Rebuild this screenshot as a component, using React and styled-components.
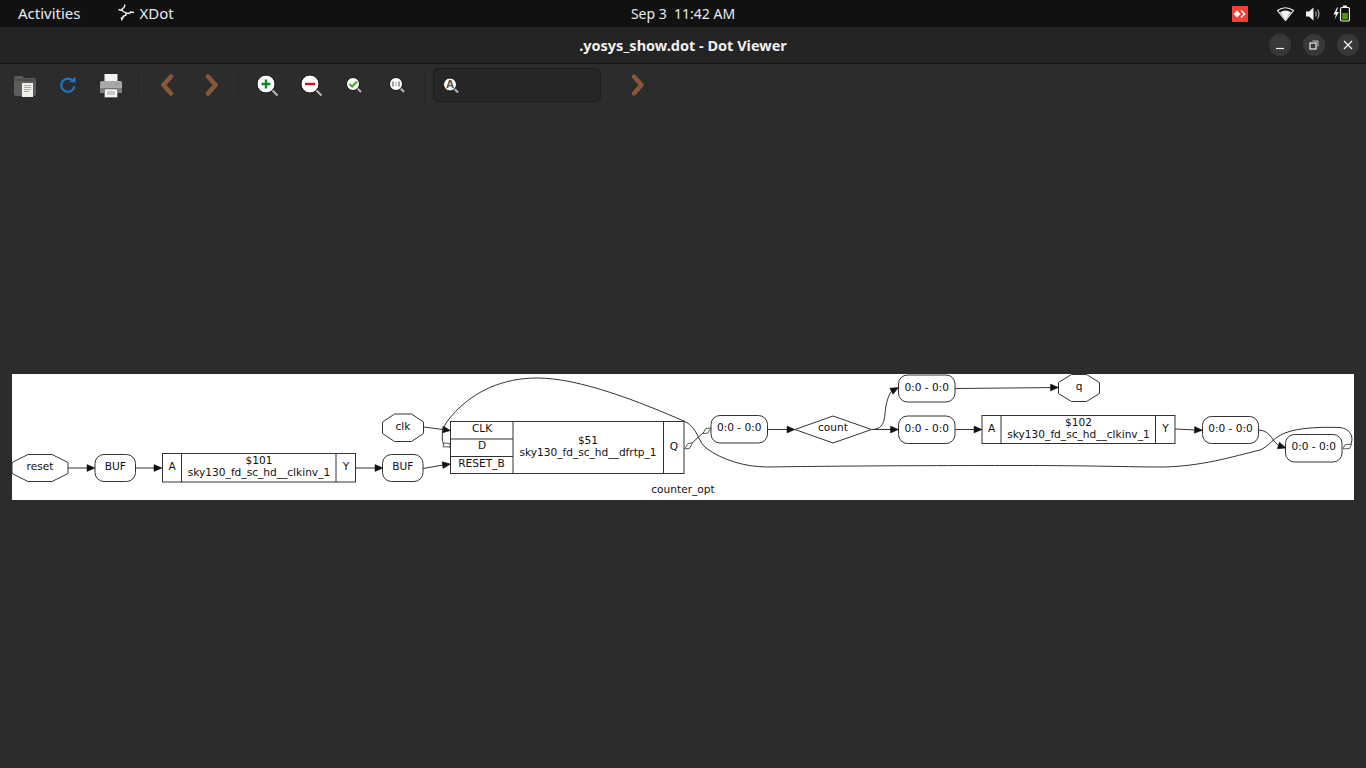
import React from 'react'
import styled, { createGlobalStyle } from 'styled-components'

const GlobalStyle = createGlobalStyle`
  html, body {
    margin: 0;
    padding: 0;
    height: 100%;
    background: #2c2c2c;
    overflow: hidden;
  }
`

const Desktop = styled.div`
  display: flex;
  flex-direction: column;
  width: 1366px;
  height: 768px;
  font-family: 'Noto Sans', sans-serif;
`

const TopBar = styled.div`
  display: grid;
  grid-template-columns: 1fr auto 1fr;
  align-items: center;
  height: 27px;
  background: #111111;
  color: #e6ecf2;
  font-size: 14px;
`

const TopLeft = styled.div`
  display: flex;
  align-items: center;
  padding: 0 0 2px 18px;
  font-size: 15px;
`

const AppMenu = styled.div`
  display: flex;
  align-items: center;
  gap: 5px;
  margin-left: 37px;
`

const Clock = styled.div`
  white-space: pre;
`

const TopRight = styled.div`
  display: flex;
  align-items: center;
  justify-content: flex-end;
  padding-right: 16px;
`

const Tray = styled.svg`
  display: block;
  margin-left: ${({ $gap }) => $gap || 0}px;
`

const TitleBar = styled.div`
  position: relative;
  display: flex;
  align-items: center;
  justify-content: center;
  height: 36px;
  background: #242424;
  border-bottom: 1px solid #171717;
  color: #f0f0f0;
  font-size: 14.5px;
  font-weight: 700;
`

const WindowButtons = styled.div`
  position: absolute;
  right: 7px;
  top: 7px;
  display: flex;
  gap: 12px;
`

const WindowButton = styled.div`
  width: 22px;
  height: 22px;
  border-radius: 50%;
  background: #383838;
  display: flex;
  align-items: center;
  justify-content: center;
`

const Toolbar = styled.div`
  display: flex;
  align-items: center;
  height: 42px;
  padding-left: 3px;
  background: #2c2c2c;
`

const Tool = styled.div`
  width: ${({ $w }) => $w || 44}px;
  height: 34px;
  display: flex;
  align-items: center;
  justify-content: center;
`

const Separator = styled.div`
  width: 1px;
  height: 34px;
  background: #262626;
  margin: 0 ${({ $right }) => $right || 6}px 0 ${({ $left }) => $left || 6}px;
`

const SearchEntry = styled.div`
  box-sizing: border-box;
  width: 168px;
  height: 34px;
  border: 1px solid #1c1c1c;
  border-radius: 6px;
  background: #262626;
  display: flex;
  align-items: center;
  padding-left: 7px;
`

const NextTool = styled(Tool)`
  margin-left: 15px;
`

const Canvas = styled.div`
  flex: 1;
  display: flex;
  align-items: center;
  padding: 0 12px;
  background: #2c2c2c;
`

const Sheet = styled.svg`
  display: block;
  width: 1342px;
  height: 126px;
  background: #ffffff;
`

const Label = styled.text`
  font-family: 'DejaVu Sans', sans-serif;
  font-size: 10.6px;
  fill: #111111;
  text-anchor: middle;
  dominant-baseline: central;
`

const Shape = styled.path`
  fill: none;
  stroke: #333333;
  stroke-width: 1;
`

const Head = styled.polygon`
  fill: #111111;
  stroke: #111111;
  stroke-width: 0.5;
`

const Pin = styled.polygon`
  fill: #ffffff;
  stroke: #333333;
  stroke-width: 0.8;
`

// rounded wire nodes and buffers
const Pill = ({ x, y, w, h, text }) => (
  <g>
    <Shape as="rect" x={x} y={y} width={w} height={h} rx="9" ry="9" />
    <Label x={x + w / 2} y={y + h / 2 - 2}>{text}</Label>
  </g>
)

const Octagon = ({ x, y, w, h, text, inset = 14 }) => {
  const side = 8
  const d = `M${x},${y + side} L${x + inset},${y} L${x + w - inset},${y} L${x + w},${y + side} L${x + w},${y + h - side} L${x + w - inset},${y + h} L${x + inset},${y + h} L${x},${y + h - side} Z`
  return (
    <g>
      <Shape d={d} />
      <Label x={x + w / 2} y={y + h / 2 - 2}>{text}</Label>
    </g>
  )
}

// arrow that ends at x,y and points along angle a (degrees)
const Arrow = ({ x, y, a = 0 }) => (
  <Head points="-8,-3.4 0,0 -8,3.4" transform={`translate(${x} ${y}) rotate(${a})`} />
)

const Cell = ({ x, y, w, h, id, text }) => (
  <g>
    <Shape as="rect" x={x} y={y} width={w} height={h} />
    <Shape d={`M${x + 19},${y} V${y + h} M${x + w - 19.5},${y} V${y + h}`} />
    <Label x={x + 9.5} y={y + h / 2 - 2}>A</Label>
    <Label x={x + w / 2} y={y + h / 2 - 7.5}>{id}</Label>
    <Label x={x + w / 2} y={y + h / 2 + 4}>{text}</Label>
    <Label x={x + w - 9.5} y={y + h / 2 - 2}>Y</Label>
  </g>
)

const Graph = () => (
  <Sheet viewBox="12 374 1342 126">
    <Octagon x={12} y={454.5} w={56} h={27} text="reset" inset={16} />
    <Pill x={95} y={454.5} w={40.5} h={27} text="BUF" />
    <Cell x={162.5} y={453.5} w={193} h={28.5} id="$101" text="sky130_fd_sc_hd__clkinv_1" />
    <Pill x={382.5} y={454.5} w={40.5} h={27} text="BUF" />
    <Octagon x={382.5} y={414} w={41} h={27.5} text="clk" inset={12} />

    <Shape as="rect" x={450.5} y={421.5} width={233.5} height={52} />
    <Shape d="M513,421.5 V473.5 M663.5,421.5 V473.5 M450.5,439 H513 M450.5,456.5 H513" />
    <Label x={482} y={428}>CLK</Label>
    <Label x={482} y={445}>D</Label>
    <Label x={481.5} y={463}>RESET_B</Label>
    <Label x={588} y={440}>$51</Label>
    <Label x={588} y={451.5}>sky130_fd_sc_hd__dfrtp_1</Label>
    <Label x={674} y={445.5}>Q</Label>

    <Pill x={711} y={415.5} w={56.5} h={27.5} text="0:0 - 0:0" />
    <Shape d="M795,429.5 L833,416 L871.5,429.5 L833,443 Z" />
    <Label x={833} y={427}>count</Label>
    <Pill x={898.5} y={375} w={56.5} h={27} text="0:0 - 0:0" />
    <Pill x={898.5} y={416} w={56.5} h={27.5} text="0:0 - 0:0" />
    <Octagon x={1058.5} y={374.5} w={41} h={27} text="q" inset={13} />
    <Cell x={982} y={415.5} w={193} h={28} id="$102" text="sky130_fd_sc_hd__clkinv_1" />
    <Pill x={1202.5} y={416.5} w={56} h={27} text="0:0 - 0:0" />
    <Pill x={1285.5} y={434.5} w={56.5} h={27.5} text="0:0 - 0:0" />
    <Label x={683} y={489}>counter_opt</Label>

    <Shape d="M68,468 H88 M136,468 H155 M356,468 H376" />
    <Arrow x={95} y={468} />
    <Arrow x={162} y={468} />
    <Arrow x={383} y={468} />
    <Shape d="M423,468.5 L443,465" />
    <Arrow x={450.5} y={464} a={-8} />
    <Shape d="M423.5,427 L443,429.5" />
    <Arrow x={450.5} y={430.5} a={7} />
    <Shape d="M767.5,429.5 H788 M871.5,429.5 H891 M955,429.5 H975 M955,388.5 L1051,387.6 M1175,429 L1196,430" />
    <Arrow x={795} y={429.5} />
    <Arrow x={898.5} y={429.5} />
    <Arrow x={982} y={429.5} />
    <Arrow x={1058.5} y={387.5} />
    <Arrow x={1202.5} y={430.2} a={2} />
    <Shape d="M871.5,429.5 C886,429.5 884,417 886,406 C887.5,397 891,391 893,390" />
    <Arrow x={898.5} y={387.5} a={-28} />
    <Shape d="M1259,430 C1272,431 1272,443 1280,446" />
    <Arrow x={1286} y={448} a={18} />

    {/* feedback from Q round the flop */}
    <Shape d="M446,423 C470,390 505,378 537,378 C580,378 640,402 685,421.5 C698,428 698,442 706,448 C722,460 745,467 768,467 C800,466.5 880,465.5 1020,465.5 C1090,465.5 1130,467 1160,467 C1200,467 1235,456 1260,450 C1270,446 1272,438 1285,433 C1300,427 1325,427 1340,427.5 C1350,429 1354,436 1351,444" />
    <Shape d="M446,423 C442,430 441,440 444,445 L450,447" />
    <Shape d="M692,443 L704,432" />
    <Pin points="684.8,448.8 688,443.5 692.5,442.8 689.5,448.4" />
    <Pin points="703,433.5 705.8,428.5 710.8,428 707.8,433.2" />
    <Pin points="443,446.8 444,443 450,443.5 450,447" />
    <Pin points="1343,448.8 1345,444.8 1351.5,444.2 1349.5,448.6" />
  </Sheet>
)

const Lens = ({ size, cx = 12, cy = 11, r = 9, children, end = 11.5 }) => (
  <svg width={size} height={size} viewBox={`0 0 ${size} ${size}`}>
    <path d={`M${cx + r * 0.7},${cy + r * 0.7} L${cx + end},${cy + end}`} stroke="#b9b8ac" strokeWidth="2" />
    <circle cx={cx} cy={cy} r={r} fill="#fbfbf8" stroke="#141414" strokeWidth="1" />
    {children}
  </svg>
)

const Chevron = ({ left }) => (
  <svg width="14" height="22" viewBox="0 0 14 22">
    <path
      d={left ? 'M11,2.5 L3.5,11 L11,19.5' : 'M3,2.5 L10.5,11 L3,19.5'}
      fill="none"
      stroke="#87583a"
      strokeWidth="4.4"
      strokeLinecap="round"
      strokeLinejoin="round"
    />
  </svg>
)

const FolderIcon = () => (
  <svg width="24" height="23" viewBox="0 0 24 23">
    <path d="M1,4 Q1,2 3,2 H9 L11,4 H21 Q23,4 23,6 V20 Q23,22 21,22 H3 Q1,22 1,20 Z" fill="#5c5c5c" />
    <path d="M1,6 H23" stroke="#3d3d3d" strokeWidth="1" />
    <path d="M9,9 H20 V23 H9 Z" fill="#f0f0ec" />
    <path d="M11,11.5 H18 M11,13.5 H18 M11,15.5 H18 M11,17.5 H16" stroke="#a8a89e" strokeWidth="1" />
  </svg>
)

const ReloadIcon = () => (
  <svg width="18" height="18" viewBox="0 0 18 18">
    <path d="M14,5 A6.6,6.6 0 1 0 15.4,10.4" fill="none" stroke="#1c76c8" strokeWidth="2.2" />
    <path d="M10.5,5.8 L16.6,6.8 L16.4,0.8 Z" fill="#1c76c8" />
  </svg>
)

const PrinterIcon = () => (
  <svg width="24" height="25" viewBox="0 0 24 25">
    <path d="M5.5,1 H18.5 V9 H5.5 Z" fill="#f2f2f2" />
    <path d="M1,10 Q1,8 3,8 H21 Q23,8 23,10 V19 Q23,20 22,20 H2 Q1,20 1,19 Z" fill="#a9a9a9" />
    <path d="M1,15 H23 V19 Q23,20 22,20 H2 Q1,20 1,19 Z" fill="#7f7f7f" />
    <path d="M16.5,11 H17.5 M18.5,11 H19.5" stroke="#c25a48" strokeWidth="1" />
    <path d="M20.5,11 H21.5" stroke="#6aa84f" strokeWidth="1" />
    <path d="M5.5,16 H18.5 V24.5 H5.5 Z" fill="#f5f5f5" stroke="#555555" strokeWidth="0.6" />
    <path d="M8,19 H16 M8,21 H16" stroke="#9a9a9a" strokeWidth="1" />
  </svg>
)

const XDotIcon = () => (
  <svg width="17" height="18" viewBox="0 0 17 18">
    <path
      d="M7,0.5 L6,3.5 L4,5 L4.5,7 M0.5,5.5 L4,6.5 M4.5,7 L8,9 M8,9 L11.5,9.5 L12.5,8 L16,8.5 M8,9 L8,11 L5,12.5 L5,14 L3.5,14 L4,16.5"
      fill="none"
      stroke="#f0f0f0"
      strokeWidth="1.4"
    />
  </svg>
)

const App = () => (
  <Desktop>
    <GlobalStyle />
    <TopBar>
      <TopLeft>
        <span>Activities</span>
        <AppMenu>
          <XDotIcon />
          <span>XDot</span>
        </AppMenu>
      </TopLeft>
      <Clock>Sep 3  11:42 AM</Clock>
      <TopRight>
        <Tray width="16" height="16" viewBox="0 0 16 16">
          <rect width="16" height="16" fill="#ef4136" />
          <path d="M5,4.5 L8.5,8 L5,11.5 L1.5,8 Z" fill="#ffffff" />
          <path d="M9,4.5 L12.5,8 L9,11.5" fill="none" stroke="#ffffff" strokeWidth="1.6" />
        </Tray>
        <Tray $gap="29" width="17" height="14" viewBox="0 0 17 14">
          <path d="M0.5,3.5 Q8.5,-2 16.5,3.5 L8.5,13.5 Z" fill="none" stroke="#f2f2f2" strokeWidth="1.2" />
          <path d="M3,5.2 Q8.5,2 14,5.2 L8.5,13 Z" fill="#f2f2f2" />
        </Tray>
        <Tray $gap="12" width="15" height="14" viewBox="0 0 15 14">
          <path d="M0,4.5 H3 L7.5,0.5 V13.5 L3,9.5 H0 Z" fill="#f2f2f2" />
          <path d="M9.5,4.5 Q11,7 9.5,9.5 M11.5,2.5 Q14.5,7 11.5,11.5" fill="none" stroke="#b5b5b5" strokeWidth="1.1" />
        </Tray>
        <Tray $gap="12" width="17" height="17" viewBox="0 0 17 17">
          <path d="M4,2.5 L0.5,9.5 H3 L1.5,14.5 L6,7 H3.5 L5,2.5 Z" fill="#f2f2f2" />
          <rect x="7.5" y="2.5" width="9" height="13.5" rx="1.5" fill="none" stroke="#f2f2f2" strokeWidth="1.2" />
          <rect x="10" y="0.5" width="4" height="2" fill="#f2f2f2" />
          <rect x="9.2" y="8" width="5.6" height="6.5" fill="#4e9a06" />
        </Tray>
      </TopRight>
    </TopBar>
    <TitleBar>
      .yosys_show.dot - Dot Viewer
      <WindowButtons>
        <WindowButton>
          <svg width="10" height="10" viewBox="0 0 10 10">
            <path d="M1,8.5 H9" stroke="#f0f0f0" strokeWidth="1.2" />
          </svg>
        </WindowButton>
        <WindowButton>
          <svg width="10" height="10" viewBox="0 0 10 10">
            <path d="M3.5,1 H9 V6.5" fill="none" stroke="#c4c4c4" strokeWidth="1" />
            <rect x="1" y="3" width="6" height="6" fill="none" stroke="#f0f0f0" strokeWidth="1.2" />
          </svg>
        </WindowButton>
        <WindowButton>
          <svg width="10" height="10" viewBox="0 0 10 10">
            <path d="M1,1 L9,9 M9,1 L1,9" stroke="#f0f0f0" strokeWidth="1.3" />
          </svg>
        </WindowButton>
      </WindowButtons>
    </TitleBar>
    <Toolbar>
      <Tool $w={43}><FolderIcon /></Tool>
      <Tool $w={43}><ReloadIcon /></Tool>
      <Tool $w={43}><PrinterIcon /></Tool>
      <Separator />
      <Tool><Chevron left /></Tool>
      <Tool $w={46}><Chevron /></Tool>
      <Separator $left={3} $right={5} />
      <Tool>
        <Lens size={24}>
          <path d="M12,6.5 V15.5 M7.5,11 H16.5" stroke="#0e8a2c" strokeWidth="2.4" />
        </Lens>
      </Tool>
      <Tool>
        <Lens size={24}>
          <path d="M7,11 H17" stroke="#c8102e" strokeWidth="2.4" />
        </Lens>
      </Tool>
      <Tool $w={43}>
        <Lens size={18} cx={8} cy={8} r={6.5} end={8}>
          <path d="M4.5,8 L7.2,10.6 L12,5.5" fill="none" stroke="#4aa02c" strokeWidth="2" />
        </Lens>
      </Tool>
      <Tool $w={43}>
        <Lens size={18} cx={8} cy={8} r={6.5} end={8}>
          <path d="M5,5.5 V10.5 M11,5.5 V10.5" stroke="#444444" strokeWidth="1" />
          <circle cx="8" cy="6.8" r="0.6" fill="#444444" />
          <circle cx="8" cy="9.2" r="0.6" fill="#444444" />
        </Lens>
      </Tool>
      <Separator $right={8} />
      <SearchEntry>
        <Lens size={18} cx={9} cy={8.5} r={6.5} end={8}>
          <text x="9" y="12" fontSize="10" fontWeight="700" textAnchor="middle" fill="#555555" fontFamily="'DejaVu Sans', sans-serif">A</text>
        </Lens>
      </SearchEntry>
      <NextTool><Chevron /></NextTool>
    </Toolbar>
    <Canvas>
      <Graph />
    </Canvas>
  </Desktop>
)

export default App
